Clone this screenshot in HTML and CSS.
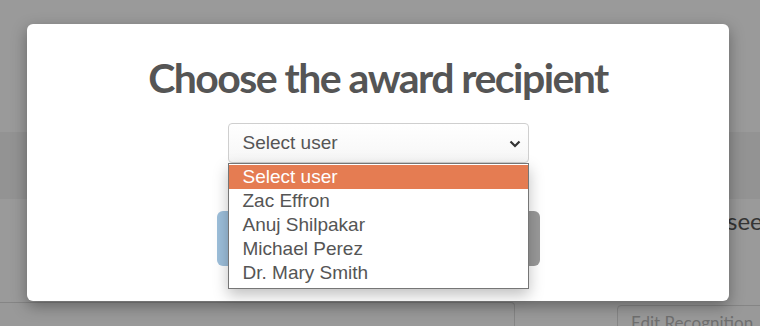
FILE: index.html
```html
<!DOCTYPE html>
<html lang="en">

<head>
  <meta charset="UTF-8">
  <meta name="viewport" content="width=device-width, initial-scale=1.0">
  <title>Award Recipient</title>
  <link rel="stylesheet" href="styles.css">
</head>

<body>
  <!-- Page behind the overlay -->
  <div class="page">
    <div class="page-top"></div>
    <div class="page-band"></div>
    <div class="page-gap"></div>
    <div class="page-row">
      <div class="page-input"></div>
      <button class="btn-edit">Edit Recognition</button>
    </div>
    <span class="page-note">see</span>
  </div>

  <!-- Modal -->
  <div class="modal">
    <h1 class="modal-title">Choose the award recipient</h1>

    <div class="select-wrap">
      <div class="select-box">
        <span>Select user</span>
        <svg class="chevron" width="12" height="8" viewBox="0 0 12 8">
          <path d="M1.5 1.5 L6 6 L10.5 1.5" fill="none" stroke="#333" stroke-width="2.2" />
        </svg>
      </div>

      <div class="modal-actions">
        <button class="btn-primary">Submit</button>
        <button class="btn-cancel">Cancel</button>
      </div>

      <ul class="select-list">
        <li class="option selected">Select user</li>
        <li class="option">Zac Effron</li>
        <li class="option">Anuj Shilpakar</li>
        <li class="option">Michael Perez</li>
        <li class="option">Dr. Mary Smith</li>
      </ul>
    </div>
  </div>
</body>

</html>
```

FILE: styles.css
```css
:root {
  --overlay: #9a9a9a;
  --band: #939393;
  --title: #555555;
  --accent: #e57c52;
  --text: #555555;
}

body {
  margin: 0;
  background: var(--overlay);
  font-family: 'Liberation Sans', Arial, sans-serif;
  overflow: hidden;
}

.page {
  position: relative;
  height: 326px;
  overflow: hidden;
}

.page-top {
  height: 132px;
}

.page-band {
  height: 67px;
  background: var(--band);
}

.page-gap {
  height: 103px;
}

.page-row {
  display: flex;
  align-items: flex-start;
}

.page-input {
  flex-shrink: 0;
  width: 514px;
  height: 40px;
  border: 1px solid #858585;
  border-left: none;
  border-radius: 0 4px 0 0;
  background: #999999;
}

.btn-edit {
  flex-shrink: 0;
  margin-left: 102px;
  margin-top: 3px;
  width: 160px;
  height: 40px;
  background: #999999;
  border: 1px solid #858585;
  border-radius: 4px;
  color: #6f6f6f;
  font-family: Lato, sans-serif;
  font-size: 17px;
  padding: 8px 13px 0;
  line-height: 1;
  display: flex;
  align-items: flex-start;
}

.page-note {
  position: absolute;
  left: 727px;
  top: 206px;
  font-family: Lato, sans-serif;
  font-size: 24px;
  color: #353535;
}

.modal {
  position: absolute;
  left: 27px;
  top: 24px;
  width: 702px;
  height: 277px;
  background: #ffffff;
  border-radius: 6px;
  box-shadow: 0 5px 15px rgba(0, 0, 0, 0.35);
  z-index: 2;
}

.modal-title {
  margin: 29px 0 0;
  text-align: center;
  font-family: Lato, sans-serif;
  font-weight: 700;
  font-size: 41px;
  letter-spacing: -1.55px;
  line-height: 50px;
  color: var(--title);
}

.select-wrap {
  position: relative;
  width: 301px;
  margin: 20px auto 0;
}

.select-box {
  box-sizing: border-box;
  height: 40px;
  border: 1px solid #cfcfcf;
  border-radius: 4px;
  background: linear-gradient(#ffffff, #f6f6f6);
  display: flex;
  align-items: center;
  justify-content: space-between;
  padding: 0 7px 0 14px;
  font-size: 19px;
  color: var(--text);
}

.chevron {
  margin-top: 1px;
}

.modal-actions {
  display: flex;
  justify-content: space-between;
  width: 323px;
  margin: 48px 0 0 -11px;
}

.modal-actions button {
  width: 140px;
  height: 55px;
  border: none;
  border-radius: 6px;
  color: transparent;
  font-size: 18px;
}

.btn-primary {
  background: #9dbfdb;
}

.btn-cancel {
  background: #999999;
}

.select-list {
  position: absolute;
  left: 0;
  top: 40px;
  box-sizing: border-box;
  width: 301px;
  margin: 0;
  padding: 1px 0 3px;
  list-style: none;
  background: #ffffff;
  border: 1px solid #767676;
  box-shadow: 0 6px 14px rgba(0, 0, 0, 0.25);
}

.option {
  height: 24px;
  line-height: 24px;
  padding-left: 14px;
  font-size: 19px;
  color: var(--text);
}

.option.selected {
  background: var(--accent);
  color: #ffffff;
}
```
